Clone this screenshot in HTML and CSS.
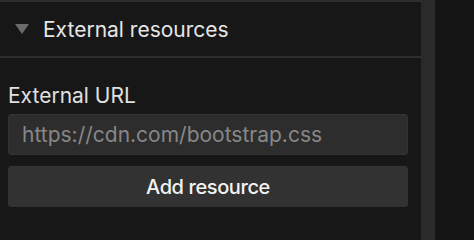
FILE: index.html
```html
<!DOCTYPE html>
<html>
<head>
<meta charset="utf-8">
<link rel="stylesheet" href="styles.css">
</head>
<body>
<div class="layout">
  <section class="panel">
    <div class="panel-header">
      <span class="caret"></span>
      <span class="title">External resources</span>
    </div>
    <div class="panel-body">
      <label class="label" for="url">External URL</label>
      <input class="input" id="url" type="text" placeholder="https://cdn.com/bootstrap.css">
      <button class="button" type="button">Add resource</button>
    </div>
  </section>
  <div class="scroll-track"></div>
  <div class="side"></div>
</div>
</body>
</html>
```

FILE: styles.css
```css
html, body {
  margin: 0;
  padding: 0;
  height: 100%;
  background: #141414;
  font-family: Inter, "Noto Sans", "Liberation Sans", sans-serif;
}

.layout {
  display: flex;
  height: 100%;
}

.panel {
  width: 421px;
  background: #171717;
  border-top: 2px solid #2e2e2e;
  box-sizing: border-box;
}

.panel-header {
  display: flex;
  align-items: center;
  height: 54px;
  padding-left: 15px;
  border-bottom: 2px solid #2e2e2e;
}

.caret {
  width: 0;
  height: 0;
  border-left: 7px solid transparent;
  border-right: 7px solid transparent;
  border-top: 10px solid #6b6b6b;
  margin-right: 14px;
}

.title {
  color: #e6e6e6;
  font-size: 21px;
}

.panel-body {
  display: flex;
  flex-direction: column;
  padding: 25px 13px 0 8px;
}

.label {
  color: #e0e0e0;
  font-size: 21px;
  line-height: 26px;
  margin-bottom: 5px;
}

.input, .button {
  height: 41px;
  box-sizing: border-box;
  border: 1px solid #333333;
  border-radius: 3px;
  font-family: inherit;
}

.input {
  background: #2d2d2d;
  color: #e0e0e0;
  font-size: 21px;
  padding: 0 13px;
  outline: none;
  margin-bottom: 11px;
}

.input::placeholder {
  color: #878787;
}

.button {
  background: #323232;
  color: #f2f2f2;
  font-size: 20px;
  font-weight: 500;
  letter-spacing: -0.4px;
}

.scroll-track {
  width: 14px;
  background: #2a2a2a;
}

.side {
  flex: 1;
  background: #141414;
}
```
